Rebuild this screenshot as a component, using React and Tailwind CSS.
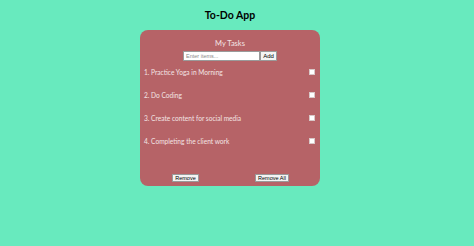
import React, { useState } from "react";

const initialTasks = [
  "Practice Yoga in Morning",
  "Do Coding",
  "Create content for social media",
  "Completing the client work",
];

const App = () => {
  const [tasks, setTasks] = useState(initialTasks);
  const [text, setText] = useState("");

  const addTask = () => {
    if (!text.trim()) return;
    setTasks([...tasks, text.trim()]);
    setText("");
  };

  return (
    <div className="w-[474px] h-[246px] bg-[#68eabe] flex flex-col items-center pt-[8px] pr-[14px] font-['Lato',sans-serif]">
      <h1 className="text-[10.5px] leading-[14px] font-bold text-black">To-Do App</h1>

      <div className="mt-[8px] w-[180px] h-[156px] rounded-[8px] bg-[#b66367] flex flex-col pt-[8px]">
        <div className="text-center text-[7.5px] leading-[10px] text-[#f3e4e4] translate-y-[1px]">My Tasks</div>

        <div className="mt-[3px] flex justify-center">
          <input
            value={text}
            onChange={(e) => setText(e.target.value)}
            placeholder="Enter items..."
            className="w-[77px] h-[10px] bg-white px-[2px] text-[5.5px] text-black placeholder:text-[#8a8a8a] outline-none border border-[#9a9a9a] font-['Liberation_Sans',sans-serif]"
          />
          <button
            onClick={addTask}
            className="h-[10px] w-[17px] bg-[#f4f4f4] border border-[#9a9a9a] text-[6px] leading-[8px] text-black font-['Liberation_Sans',sans-serif]"
          >
            Add
          </button>
        </div>

        <ul className="flex flex-col -mt-[1px]">
          {tasks.slice(0, 4).map((task, i) => (
            <li key={i} className="h-[23px] flex items-center justify-between pl-[4px] pr-[5px]">
              <span className="text-[6.6px] leading-[10px] text-[#f3e4e4]">
                {i + 1}. {task}
              </span>
              <span className="w-[6px] h-[6px] bg-white border border-[#d8c8c8]"></span>
            </li>
          ))}
        </ul>

        <div className="mt-[22px] flex justify-between pl-[32px] pr-[31px]">
          <button
            onClick={() => setTasks(tasks.slice(0, -1))}
            className="h-[8px] w-[27px] bg-[#f4f4f4] border border-[#9a9a9a] text-[5.5px] leading-[6px] text-black font-['Liberation_Sans',sans-serif]"
          >
            Remove
          </button>
          <button
            onClick={() => setTasks([])}
            className="h-[8px] w-[34px] bg-[#f4f4f4] border border-[#9a9a9a] text-[5.5px] leading-[6px] text-black font-['Liberation_Sans',sans-serif]"
          >
            Remove All
          </button>
        </div>
      </div>
    </div>
  );
};

export default App;
